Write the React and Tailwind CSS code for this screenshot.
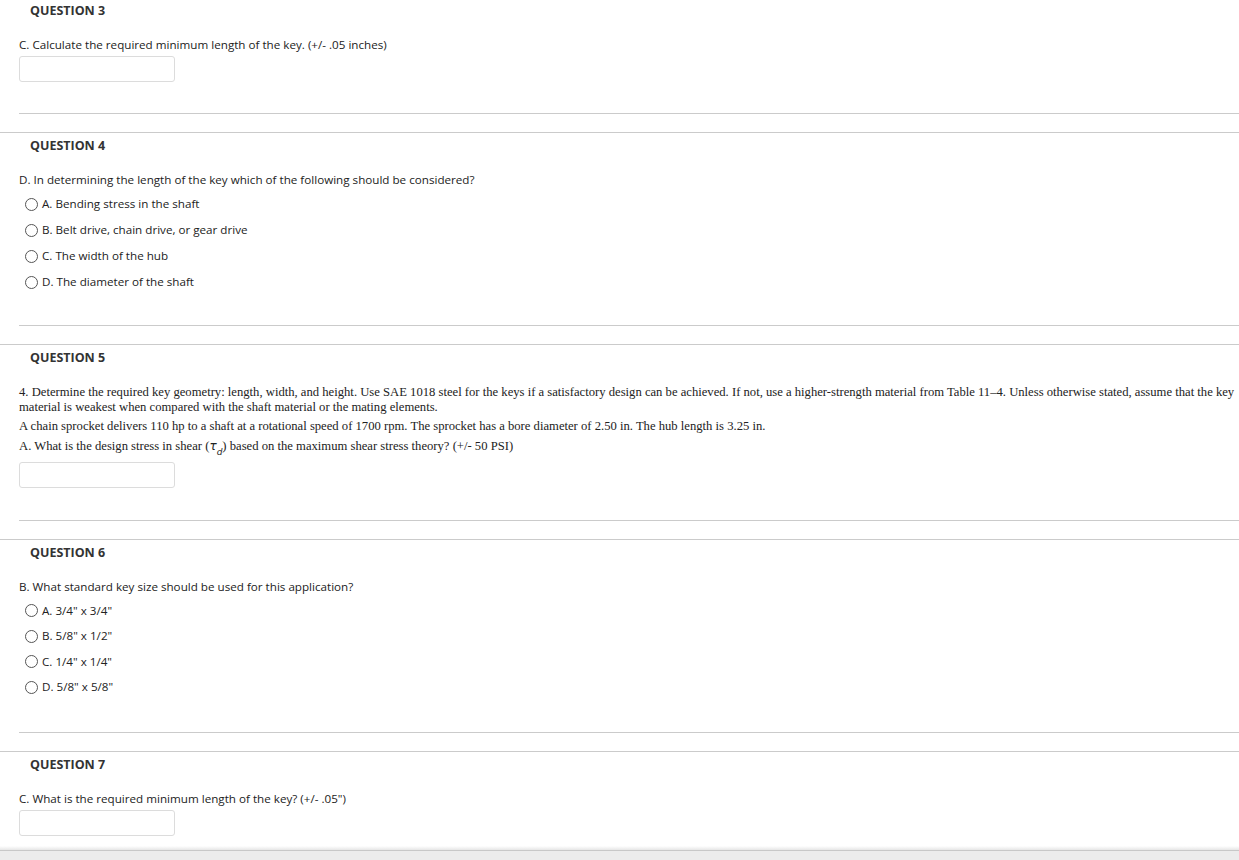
import React from 'react';

const sans = "font-['Open_Sans',sans-serif]";
const serif = "font-['Liberation_Serif','Times_New_Roman',serif]";

const Title = ({ n }) => (
  <div className={`${sans} pl-[30px] h-[18px] text-[12.5px] leading-[18px] font-bold text-[#333]`}>QUESTION {n}</div>
);

const Prompt = ({ children }) => (
  <div className={`${sans} mt-[16px] text-[11.65px] leading-[18px] text-[#222]`}>{children}</div>
);

const AnswerBox = ({ className = '' }) => (
  <div className={`w-[156px] h-[26px] border border-[#dcdcdc] rounded-[3px] bg-white ${className}`}></div>
);

const Options = ({ items, row }) => (
  <div className="mt-[2px]">
    {items.map((t) => (
      <label key={t} className={`flex items-center ${row} pl-[6px]`}>
        <span className="w-[13px] h-[13px] rounded-full border border-[#555] bg-white shrink-0"></span>
        <span className={`${sans} ml-[4px] text-[11.65px] leading-[18px] text-[#222]`}>{t}</span>
      </label>
    ))}
  </div>
);

const Block = ({ n, first, children, gap = 'mt-[32px]' }) => (
  <section className={`${first ? 'pt-[2px]' : 'border-t border-[#cbcbcb] pt-[4px]'}`}>
    <Title n={n} />
    <div className="pl-[19px]">
      {children}
      <div className={`${gap} border-t border-[#cbcbcb]`}></div>
    </div>
    <div className="h-[18px]"></div>
  </section>
);

export default function App() {
  return (
    <div className="w-[1239px] h-[860px] bg-white overflow-hidden flex flex-col">
      <Block n={3} first gap="mt-[31px]">
        <Prompt>C. Calculate the required minimum length of the key. (+/- .05 inches)</Prompt>
        <AnswerBox className="mt-[2px]" />
      </Block>

      <Block n={4} gap="mt-[30px]">
        <Prompt>D. In determining the length of the key which of the following should be considered?</Prompt>
        <Options
          row="h-[26px]"
          items={[
            'A. Bending stress in the shaft',
            'B. Belt drive, chain drive, or gear drive',
            'C. The width of the hub',
            'D. The diameter of the shaft',
          ]}
        />
      </Block>

      <Block n={5} gap="mt-[32px]">
        <div className={`${serif} mt-[18px] text-[12.65px] leading-[15px] text-[#222]`}>
          <p className="mb-[4px]">
            4. Determine the required key geometry: length, width, and height. Use SAE 1018 steel for the keys if a satisfactory design can be achieved. If not, use a higher-strength material from Table 11–4. Unless otherwise stated, assume that the key material is weakest when compared with the shaft material or the mating elements.
          </p>
          <p className="mb-[5px]">
            A chain sprocket delivers 110 hp to a shaft at a rotational speed of 1700 rpm. The sprocket has a bore diameter of 2.50 in. The hub length is 3.25 in.
          </p>
          <p className="h-[15px]">
            A. What is the design stress in shear (
            <span className="font-['DejaVu_Sans',sans-serif] italic text-[12px]">τ</span>
            <sub className="font-['DejaVu_Sans',sans-serif] italic text-[9px] leading-none align-[-3px]">d</sub>
            ) based on the maximum shear stress theory? (+/- 50 PSI)
          </p>
        </div>
        <AnswerBox className="mt-[8px]" />
      </Block>

      <Block n={6} gap="mt-[32px]">
        <Prompt>B. What standard key size should be used for this application?</Prompt>
        <Options
          row="h-[25.5px]"
          items={['A. 3/4" x 3/4"', 'B. 5/8" x 1/2"', 'C. 1/4" x 1/4"', 'D. 5/8" x 5/8"']}
        />
      </Block>

      <section className="border-t border-[#cbcbcb] pt-[4px]">
        <Title n={7} />
        <div className="pl-[19px]">
          <Prompt>C. What is the required minimum length of the key? (+/- .05")</Prompt>
          <AnswerBox className="mt-[2px]" />
        </div>
      </section>

      <div className="mt-[10px] h-[4px] bg-gradient-to-b from-white to-[#e6e6e6]"></div>
      <div className="flex-1 border-t border-[#c8c8c8] bg-[#ececec]"></div>
    </div>
  );
}
